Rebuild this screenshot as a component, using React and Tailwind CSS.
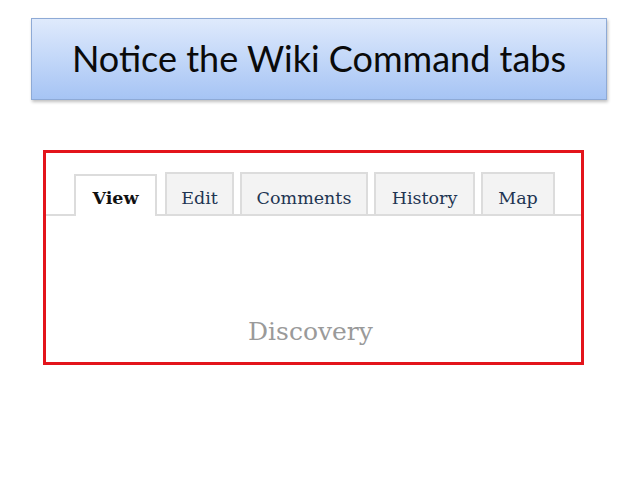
import React from "react";

const tabs = [
  { label: "Comments", w: "w-[128px]" },
  { label: "History", w: "w-[101px]" },
  { label: "Map", w: "w-[74px]" },
];

export default function App() {
  return (
    <div className="w-[638px] h-[478px] bg-white overflow-hidden">
      <div className="pt-[18px] pl-[31px]">
        <div className="w-[576px] h-[82px] border border-[#8eaad6] bg-linear-to-b from-[#dfeafc] to-[#a6c4f4] shadow-[1px_2px_3px_rgba(0,0,0,0.25)] flex items-center justify-center">
          <span className="font-['Lato',sans-serif] text-[36px] text-[#0a0a0a] leading-none pb-[3px]">
            Notice the Wiki Command tabs
          </span>
        </div>
      </div>

      <div className="mt-[50px] ml-[43px] w-[541px] h-[215px] border-[3px] border-[#e3141b] pt-[19px]">
        <div className="flex items-end gap-[6px] pl-[28px] border-b-2 border-[#dcdcdc] font-['DejaVu_Serif',serif] text-[17.5px]">
          <div className="w-[83px] h-[42px] -mb-[2px] bg-white border-2 border-b-0 border-[#dcdcdc] flex items-end justify-center pb-[5px] font-bold text-[#111] mr-[2px]">
            View
          </div>
          <div className="w-[69px] h-[42px] bg-[#f3f3f3] border-2 border-b-0 border-[#dcdcdc] flex items-end justify-center pb-[3px] text-[#1e3552]">
            Edit
          </div>
          {tabs.map((t) => (
            <div
              key={t.label}
              className={`${t.w} h-[42px] bg-[#f3f3f3] border-2 border-b-0 border-[#dcdcdc] flex items-end justify-center pb-[3px] text-[#1e3552]`}
            >
              {t.label}
            </div>
          ))}
        </div>
        <div className="mt-[101px] text-center font-['DejaVu_Serif',serif] text-[25px] leading-[30px] text-[#9a9a9a] pr-[6px]">
          Discovery
        </div>
      </div>
    </div>
  );
}
